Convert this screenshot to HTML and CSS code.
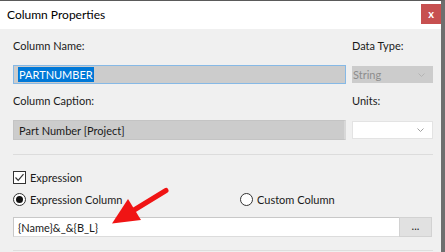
FILE: index.html
```html
<!DOCTYPE html>
<html>
<head>
<meta charset="utf-8">
<link rel="stylesheet" href="styles.css">
</head>
<body>
<div class="window">
  <div class="titlebar">
    <span class="title">Column Properties</span>
    <span class="close">x</span>
  </div>
  <div class="content">
    <div class="grid">
      <div class="label lbl-first">Column Name:</div>
      <div class="label lbl-first">Data Type:</div>
      <div class="field name-field"><span class="sel">PARTNUMBER</span></div>
      <div class="combo combo-disabled"><span>String</span><svg class="chev" width="7" height="4" viewBox="0 0 7 4"><path d="M0.5 0.5 L3.5 3.5 L6.5 0.5" fill="none" stroke="#b4b4b4" stroke-width="1"/></svg></div>
      <div class="label lbl-second">Column Caption:</div>
      <div class="label lbl-second">Units:</div>
      <div class="field caption-field">Part Number [Project]</div>
      <div class="combo combo-units"><span></span><svg class="chev" width="7" height="4" viewBox="0 0 7 4"><path d="M0.5 0.5 L3.5 3.5 L6.5 0.5" fill="none" stroke="#a0a0a0" stroke-width="1"/></svg></div>
    </div>
    <div class="sep"></div>
    <div class="check-row">
      <span class="checkbox"><svg width="11" height="11" viewBox="0 0 11 11"><path d="M1.5 5.5 L4.2 8.3 L9.5 2.2" fill="none" stroke="#333" stroke-width="1.2"/></svg></span>
      <span>Expression</span>
    </div>
    <div class="radio-row">
      <div class="radio-item first"><span class="radio on"></span><span>Expression Column</span></div>
      <div class="radio-item"><span class="radio"></span><span>Custom Column</span></div>
    </div>
    <div class="expr-row">
      <div class="expr-field">{Name}&amp;_&amp;{B_L}</div>
      <div class="dots">...</div>
    </div>
    <div class="bottom-line"></div>
  </div>
  <svg class="arrow" width="445" height="252" viewBox="0 0 445 252">
    <line x1="166" y1="190.5" x2="130" y2="212.5" stroke="#f01414" stroke-width="5" stroke-linecap="round"/>
    <polygon points="112,223.5 128,199 141,220" fill="#f01414"/>
  </svg>
</div>
</body>
</html>
```
FILE: styles.css
```css
html, body {
  margin: 0;
  padding: 0;
}
body {
  width: 445px;
  height: 252px;
  overflow: hidden;
  background: #f0f0f0;
  font-family: Lato, "Noto Sans", sans-serif;
  font-size: 11px;
  color: #1a1a1a;
}
.window {
  position: relative;
  width: 441px;
  height: 251px;
  border-top: 1px solid #5a5a5a;
  border-right: 4px solid #6e6e6e;
  background: #f0f0f0;
}
.titlebar {
  height: 28px;
  background: #ffffff;
  display: flex;
  align-items: center;
  justify-content: space-between;
  padding-left: 7px;
  padding-right: 0;
}
.title {
  font-size: 12px;
  color: #000;
  margin-top: -1px;
}
.close {
  width: 20px;
  height: 20px;
  margin-top: -3px;
  background: #c75050;
  color: #fff;
  font-weight: bold;
  font-size: 11px;
  display: flex;
  align-items: center;
  justify-content: center;
  line-height: 1;
}
.content {
  padding: 0 8px 0 13px;
}
.grid {
  display: grid;
  grid-template-columns: 333px 81px;
  column-gap: 6px;
}
.label {
  height: 18px;
  line-height: 18px;
}
.lbl-first {
  margin-top: 8px;
  margin-bottom: 10px;
}
.lbl-second {
  margin-top: 8px;
  margin-bottom: 10px;
}
.field {
  box-sizing: border-box;
  height: 19px;
  background: #cccccc;
  display: flex;
  align-items: center;
  padding-left: 4px;
}
.name-field {
  border: 1px solid #86b9e6;
  height: 19px;
}
.sel {
  background: #0078d7;
  color: #fff;
  line-height: 15px;
  padding: 0 1px;
}
.caption-field {
  border: 1px solid #c4c4c4;
  border-right: 2px solid #d8d8d8;
  padding-left: 5px;
  height: 20px;
}
.combo {
  box-sizing: border-box;
  height: 17px;
  display: flex;
  align-items: center;
  justify-content: space-between;
  padding: 0 8px 0 1px;
}
.combo-disabled {
  background: #cccccc;
  color: #8d8d8d;
  margin-top: 1px;
}
.combo-units {
  background: #ffffff;
  border: 1px solid #e3e3e3;
  margin-top: 1px;
  height: 18px;
}
.chev {
  display: block;
}
.sep {
  height: 1px;
  background: #dcdcdc;
  margin-top: 14px;
}
.check-row {
  display: flex;
  align-items: center;
  gap: 4px;
  margin-top: 15px;
  height: 14px;
}
.checkbox {
  box-sizing: border-box;
  width: 13px;
  height: 13px;
  border: 1px solid #333;
  background: #fff;
  display: flex;
  align-items: center;
  justify-content: center;
}
.checkbox svg {
  display: block;
}
.radio-row {
  display: flex;
  align-items: center;
  margin-top: 6px;
  height: 18px;
}
.radio-item {
  display: flex;
  align-items: center;
  gap: 4px;
}
.radio-item.first {
  width: 227px;
}
.radio {
  box-sizing: border-box;
  width: 13px;
  height: 13px;
  border: 1px solid #333;
  border-radius: 50%;
  background: #fff;
  display: flex;
  align-items: center;
  justify-content: center;
}
.radio.on::after {
  content: "";
  width: 7px;
  height: 7px;
  border-radius: 50%;
  background: #111;
}
.expr-row {
  display: flex;
  margin-top: 9px;
  height: 20px;
}
.expr-field {
  box-sizing: border-box;
  width: 386px;
  background: #fff;
  border-top: 1px solid #c8c8c8;
  border-left: 1px solid #c8c8c8;
  border-bottom: 1px solid #dcdcdc;
  padding-left: 4px;
  display: flex;
  align-items: center;
}
.dots {
  box-sizing: border-box;
  width: 33px;
  height: 20px;
  background: #e1e1e1;
  border: 1px solid #d2d2d2;
  display: flex;
  align-items: center;
  justify-content: center;
  font-size: 11px;
  color: #222;
  padding-bottom: 3px;
}
.bottom-line {
  height: 1px;
  background: #dedede;
  margin-top: 13px;
}
.arrow {
  position: absolute;
  left: 0;
  top: -1px;
  pointer-events: none;
}
```
